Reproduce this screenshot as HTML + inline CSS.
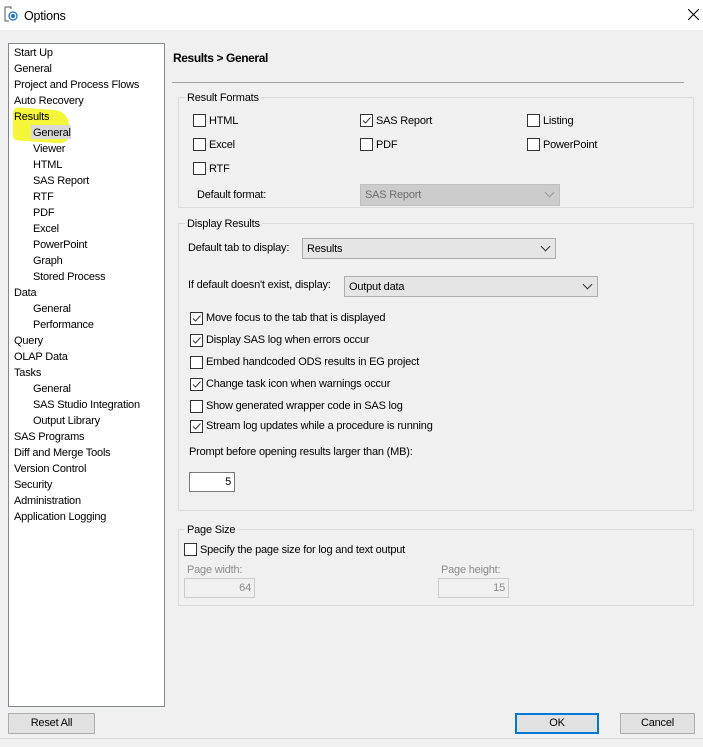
<!DOCTYPE html>
<html><head><style>
body{margin:0;width:703px;height:747px;background:#f0f0f0;position:relative;overflow:hidden;font-family:"Liberation Sans",Arial,sans-serif;font-size:11px;letter-spacing:-0.2px;color:#000}
.t{position:absolute;white-space:nowrap;line-height:14px;font-size:11px;margin-top:1px}
.g{color:#8a8a8a}
.cb{position:absolute;width:11px;height:11px;border:1px solid #333;background:#fff}
.cb svg{position:absolute;left:0;top:0}
.grp{position:absolute;border:1px solid #dcdcdc}
.gt{position:absolute;background:#f0f0f0;padding:0 2px;line-height:14px;white-space:nowrap;margin-top:1px}
.combo{position:absolute;border:1px solid #adadad;background:#e5e5e5;box-sizing:border-box}
.combo span{position:absolute;left:4px;top:3px;line-height:14px}
.combo i{position:absolute;right:6px;top:4px;width:6px;height:6px;border-right:1px solid #333;border-bottom:1px solid #333;transform:rotate(45deg)}
.btn{position:absolute;border:1px solid #adadad;background:#e1e1e1;box-sizing:border-box;text-align:center;line-height:19px}
.inp{position:absolute;box-sizing:border-box;border:1px solid #7a7a7a;background:#fff;text-align:right;padding-right:3px;line-height:18px}
</style></head><body>
<div style="position:absolute;left:0;top:0;width:703px;height:30px;background:#fff"></div>
<svg style="position:absolute;left:4px;top:6px" width="14" height="16" viewBox="0 0 14 16"><path d="M1 1h6v2M1 1v14h4" fill="none" stroke="#555" stroke-width="1"/><circle cx="9" cy="10" r="4" fill="none" stroke="#1e73c8" stroke-width="1.3"/><circle cx="9" cy="10" r="2" fill="#1e73c8"/></svg>
<div class="t" style="left:24px;top:8px;font-size:12.5px">Options</div>
<svg style="position:absolute;left:688px;top:9px" width="11" height="11"><path d="M0 0L11 11M11 0L0 11" stroke="#000" stroke-width="1.1"/></svg>

<div style="position:absolute;left:8px;top:43px;width:155px;height:662px;background:#fff;border:1px solid #828790"></div>
<div style="position:absolute;left:13px;top:109px;width:56px;height:33px;background:#f5f53a;border-radius:6px 14px 10px 4px;transform:skewY(4deg)"></div>
<div style="position:absolute;left:31px;top:125px;width:40px;height:14px;background:#d9d9d9"></div>
<div class="t" style="left:14px;top:45px">Start Up</div>
<div class="t" style="left:14px;top:61px">General</div>
<div class="t" style="left:14px;top:77px">Project and Process Flows</div>
<div class="t" style="left:14px;top:93px">Auto Recovery</div>
<div class="t" style="left:14px;top:109px">Results</div>
<div class="t" style="left:33px;top:125px">General</div>
<div class="t" style="left:33px;top:141px">Viewer</div>
<div class="t" style="left:33px;top:157px">HTML</div>
<div class="t" style="left:33px;top:173px">SAS Report</div>
<div class="t" style="left:33px;top:189px">RTF</div>
<div class="t" style="left:33px;top:205px">PDF</div>
<div class="t" style="left:33px;top:221px">Excel</div>
<div class="t" style="left:33px;top:237px">PowerPoint</div>
<div class="t" style="left:33px;top:253px">Graph</div>
<div class="t" style="left:33px;top:269px">Stored Process</div>
<div class="t" style="left:14px;top:285px">Data</div>
<div class="t" style="left:33px;top:301px">General</div>
<div class="t" style="left:33px;top:317px">Performance</div>
<div class="t" style="left:14px;top:333px">Query</div>
<div class="t" style="left:14px;top:349px">OLAP Data</div>
<div class="t" style="left:14px;top:365px">Tasks</div>
<div class="t" style="left:33px;top:381px">General</div>
<div class="t" style="left:33px;top:397px">SAS Studio Integration</div>
<div class="t" style="left:33px;top:413px">Output Library</div>
<div class="t" style="left:14px;top:429px">SAS Programs</div>
<div class="t" style="left:14px;top:445px">Diff and Merge Tools</div>
<div class="t" style="left:14px;top:461px">Version Control</div>
<div class="t" style="left:14px;top:477px">Security</div>
<div class="t" style="left:14px;top:493px">Administration</div>
<div class="t" style="left:14px;top:509px">Application Logging</div>

<div class="t" style="left:173px;top:50px;font-weight:bold;font-size:12px;letter-spacing:-0.4px">Results &gt; General</div>
<div style="position:absolute;left:172px;top:82px;width:512px;height:1px;background:#a0a0a0"></div>

<div class="grp" style="left:178px;top:97px;width:514px;height:109px"></div>
<div class="gt" style="left:185px;top:90px">Result Formats</div>
<div class="cb" style="left:193px;top:114px"></div><div class="t" style="left:209px;top:113px">HTML</div>
<div class="cb" style="left:193px;top:138px"></div><div class="t" style="left:209px;top:137px">Excel</div>
<div class="cb" style="left:193px;top:162px"></div><div class="t" style="left:209px;top:161px">RTF</div>
<div class="cb" style="left:360px;top:114px"><svg width="11" height="11"><path d="M2 5.5L4.5 8L9.5 2.5" fill="none" stroke="#333" stroke-width="1"/></svg></div><div class="t" style="left:376px;top:113px">SAS Report</div>
<div class="cb" style="left:360px;top:138px"></div><div class="t" style="left:376px;top:137px">PDF</div>
<div class="cb" style="left:527px;top:114px"></div><div class="t" style="left:543px;top:113px">Listing</div>
<div class="cb" style="left:527px;top:138px"></div><div class="t" style="left:543px;top:137px">PowerPoint</div>
<div class="t" style="left:197px;top:187px">Default format:</div>
<div class="combo" style="left:360px;top:184px;width:200px;height:22px;background:#cccccc;border-color:#bfbfbf;color:#6d6d6d"><span>SAS Report</span><i style="border-color:#999"></i></div>

<div class="grp" style="left:178px;top:223px;width:514px;height:286px"></div>
<div class="gt" style="left:185px;top:216px">Display Results</div>
<div class="t" style="left:188px;top:240px">Default tab to display:</div>
<div class="combo" style="left:302px;top:238px;width:254px;height:21px"><span>Results</span><i></i></div>
<div class="t" style="left:188px;top:277px">If default doesn't exist, display:</div>
<div class="combo" style="left:344px;top:276px;width:254px;height:21px"><span>Output data</span><i></i></div>
<div class="cb" style="left:190px;top:312px"><svg width="11" height="11"><path d="M2 5.5L4.5 8L9.5 2.5" fill="none" stroke="#333"/></svg></div><div class="t" style="left:206px;top:310px">Move focus to the tab that is displayed</div>
<div class="cb" style="left:190px;top:334px"><svg width="11" height="11"><path d="M2 5.5L4.5 8L9.5 2.5" fill="none" stroke="#333"/></svg></div><div class="t" style="left:206px;top:332px">Display SAS log when errors occur</div>
<div class="cb" style="left:190px;top:356px"></div><div class="t" style="left:206px;top:354px">Embed handcoded ODS results in EG project</div>
<div class="cb" style="left:190px;top:378px"><svg width="11" height="11"><path d="M2 5.5L4.5 8L9.5 2.5" fill="none" stroke="#333"/></svg></div><div class="t" style="left:206px;top:376px">Change task icon when warnings occur</div>
<div class="cb" style="left:190px;top:400px"></div><div class="t" style="left:206px;top:398px">Show generated wrapper code in SAS log</div>
<div class="cb" style="left:190px;top:420px"><svg width="11" height="11"><path d="M2 5.5L4.5 8L9.5 2.5" fill="none" stroke="#333"/></svg></div><div class="t" style="left:206px;top:418px">Stream log updates while a procedure is running</div>
<div class="t" style="left:189px;top:444px">Prompt before opening results larger than (MB):</div>
<div class="inp" style="left:189px;top:472px;width:46px;height:20px">5</div>

<div class="grp" style="left:178px;top:529px;width:514px;height:75px"></div>
<div class="gt" style="left:185px;top:522px">Page Size</div>
<div class="cb" style="left:184px;top:543px"></div><div class="t" style="left:200px;top:542px">Specify the page size for log and text output</div>
<div class="t g" style="left:187px;top:562px">Page width:</div>
<div class="inp g" style="left:184px;top:578px;width:71px;height:20px;background:#f0f0f0;border-color:#ccc">64</div>
<div class="t g" style="left:441px;top:562px">Page height:</div>
<div class="inp g" style="left:438px;top:578px;width:71px;height:20px;background:#f0f0f0;border-color:#ccc">15</div>

<div class="btn" style="left:8px;top:713px;width:87px;height:21px">Reset All</div>
<div class="btn" style="left:515px;top:713px;width:84px;height:21px;border:2px solid #0078d7;line-height:17px">OK</div>
<div class="btn" style="left:620px;top:713px;width:75px;height:21px">Cancel</div>
<div style="position:absolute;left:0;top:738px;width:703px;height:1px;background:#dadada"></div>
</body></html>
